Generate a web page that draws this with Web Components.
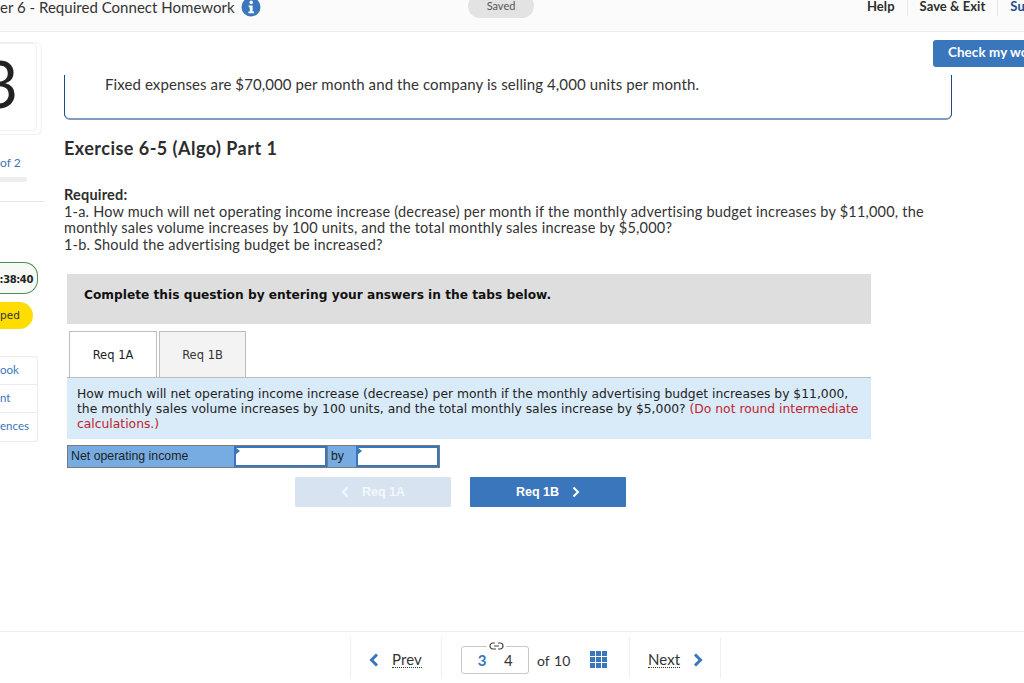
<!DOCTYPE html>
<html>
<head>
<meta charset="utf-8">
<title>Exercise 6-5</title>
<style>
  html, body { margin: 0; padding: 0; background: #fff; }
  body { width: 1024px; height: 683px; overflow: hidden; display: flex; flex-direction: column; font-family: Lato, "Liberation Sans", sans-serif; color: #2d2d2d; }
  .main { flex: 1; display: flex; min-height: 0; }
</style>
</head>
<body>
<app-header></app-header>
<div class="main">
  <side-rail></side-rail>
  <question-body></question-body>
</div>
<nav-footer></nav-footer>

<script>
class AppHeader extends HTMLElement {
  constructor() {
    super();
    this.attachShadow({ mode: 'open' });
    this.shadowRoot.innerHTML = `
      <style>
        :host { display: flex; flex: none; height: 32px; box-sizing: border-box; background: #fbfbfb; border-bottom: 1px solid #ececec; overflow: hidden; align-items: flex-start; }
        .title { width: 468px; flex: none; display: flex; align-items: center; gap: 6px; height: 14px; font-size: 15px; letter-spacing: .02px; color: #333; white-space: nowrap; }
        .title svg { flex: none; margin-top: -1px; }
        .saved { width: 66px; flex: none; height: 24px; margin-top: -6px; padding-top: 6px; box-sizing: border-box; border-radius: 12px; background: #e3e3e3; color: #555; font-size: 11px; line-height: 12px; text-align: center; }
        .links { display: flex; margin-left: 321px; font-size: 13px; font-weight: 700; line-height: 13px; letter-spacing: .05px; white-space: nowrap; color: #2d2d2d; }
        .links span { height: 16px; padding: 0 12px; border-right: 1px solid #e6e6e6; }
        .links span:last-child { border: 0; color: #1f4e8c; padding-right: 0; }
      </style>
      <div class="title">
        <span>er 6 - Required Connect Homework</span>
        <svg width="20" height="20" viewBox="0 0 20 20"><circle cx="10" cy="10" r="9.5" fill="#3a76bc"/><circle cx="10.2" cy="5.4" r="1.8" fill="#fff"/><path d="M7.6 8.400h4v6h1.400v1.800H7.400v-1.800h1.400v-4.200H7.600z" fill="#fff"/></svg>
      </div>
      <div class="saved">Saved</div>
      <div class="links"><span>Help</span><span>Save &amp; Exit</span><span>Su</span></div>
    `;
  }
}

class SideRail extends HTMLElement {
  constructor() {
    super();
    this.attachShadow({ mode: 'open' });
    this.shadowRoot.innerHTML = `
      <style>
        :host { display: block; flex: none; width: 64px; overflow: hidden; padding-top: 10px; box-sizing: border-box; }
        .outer { width: 42px; height: 93px; box-sizing: border-box; border: 1px solid #f0f0f0; border-left: 0; border-radius: 0 6px 6px 0; }
        .inner { width: 37px; height: 88px; box-sizing: border-box; border: 1px solid #f0f0f0; border-left: 0; border-radius: 0 5px 5px 0; overflow: hidden; }
        .num { font-size: 66px; line-height: 78px; margin-left: -20px; color: #222; }
        .of { margin-top: 21px; font-size: 12px; line-height: 14px; color: #3a76bc; }
        .bar { width: 27px; height: 5px; margin-top: 7px; border-radius: 0 3px 3px 0; background: #eeeeee; }
        .rule { width: 45px; height: 1px; margin-top: 19px; background: #e8e8e8; }
        .timer { display: flex; justify-content: flex-end; width: 38px; height: 32px; margin-top: 60px; box-sizing: border-box; border: 1px solid #4f8f4f; border-left: 0; border-radius: 0 14px 14px 0; background: #f6f9f5; font: 700 10px/33px "DejaVu Sans", sans-serif; letter-spacing: -.4px; color: #222; padding-right: 4px; white-space: nowrap; overflow: hidden; }
        .timer span { flex: none; }
        .status { width: 33px; height: 27px; margin-top: 8px; box-sizing: border-box; border-radius: 0 14px 14px 0; background: #ffdd00; font: 10.5px/27px "DejaVu Sans", sans-serif; color: #333; text-align: right; padding-right: 14px; }
        .links { width: 38px; margin-top: 27px; box-sizing: border-box; border: 1px solid #ececec; border-left: 0; border-radius: 0 4px 4px 0; }
        .links div { height: 28px; box-sizing: border-box; font: 11.5px/25px Lato, sans-serif; color: #3a76bc; border-bottom: 1px solid #ececec; white-space: nowrap; }
        .links div:last-child { border-bottom: 0; }
      </style>
      <div class="outer"><div class="inner"><div class="num">3</div></div></div>
      <div class="of">of 2</div>
      <div class="bar"></div>
      <div class="rule"></div>
      <div class="timer"><span>2:38:40</span></div>
      <div class="status">ped</div>
      <div class="links"><div>ook</div><div>nt</div><div>ences</div></div>
    `;
  }
}

class QuestionBody extends HTMLElement {
  constructor() {
    super();
    this.attachShadow({ mode: 'open' });
    this.shadowRoot.innerHTML = `
      <style>
        :host { display: block; flex: 1; min-width: 0; overflow: hidden; padding-top: 8px; font-size: 15px; letter-spacing: .1px; color: #333; }
        .check { width: 91px; height: 27px; margin-left: 869px; padding-left: 15px; box-sizing: border-box; white-space: nowrap; overflow: hidden; border-radius: 3px 0 0 3px; background: #3a76bc; color: #fff; font-size: 13.4px; font-weight: 700; line-height: 24px; }
        .given { width: 888px; height: 45px; margin-top: 8px; box-sizing: border-box; padding: 0 0 0 40px; border-left: 1px solid #1f4a86; border-right: 1px solid #1f4a86; border-bottom: 2px solid #7f9bc0; border-radius: 0 0 6px 6px; line-height: 18px; }
        h2 { margin: 17px 0 0; font-size: 18px; line-height: 22px; letter-spacing: .47px; font-weight: 700; color: #2d2d2d; }
        .req { margin-top: 28px; font-size: 14.5px; letter-spacing: .2px; line-height: 16.5px; width: 880px; }
        .req b { color: #2d2d2d; }
        .verd { margin-left: 3px; width: 804px; font-family: "DejaVu Sans", sans-serif; letter-spacing: 0; }
        .complete { height: 50px; margin-top: 21px; box-sizing: border-box; padding-left: 17px; background: #dedede; color: #111; font-size: 12.2px; font-weight: 700; line-height: 43px; }
        .tabs { display: flex; gap: 2px; margin: 7px 0 0 2px; position: relative; z-index: 1; }
        .tab { width: 88px; height: 46px; box-sizing: border-box; border: 1px solid #bdbdbd; border-bottom: 0; font-size: 11.5px; line-height: 46px; text-align: center; color: #222; background: #fff; }
        .tab + .tab { width: 87px; background: #f3f3f3; color: #333; }
        .panel { height: 62px; box-sizing: border-box; padding: 9px 10px 0; background: #d9ebf9; border-top: 1px solid #bdbdbd; font-size: 12.33px; line-height: 15px; color: #222; }
        .panel em { font-style: normal; color: #c0222c; }
        .grid { display: flex; width: 373px; height: 23px; margin-top: 6px; box-sizing: border-box; border: 1px solid #7a7a7a; background: #77ace3; font: 12.35px/21px "Liberation Sans", sans-serif; letter-spacing: 0; color: #222; }
        .grid .lbl { width: 166px; padding-left: 3px; box-sizing: border-box; }
        .grid .by { width: 29px; padding-left: 3px; box-sizing: border-box; border-left: 1px solid #7a7a7a; }
        .grid .cell { width: 93px; position: relative; box-sizing: border-box; background: #fff; border: 2px solid #3a76bc; }
        .grid .cell + .by + .cell { width: 83px; }
        .grid .cell::before { content: ""; position: absolute; left: -1px; top: -1px; border-left: 5px solid #3a76bc; border-top: 4px solid transparent; border-bottom: 4px solid transparent; }
        .btns { display: flex; gap: 19px; margin: 9px 0 0 228px; }
        .btn { display: flex; align-items: center; justify-content: center; gap: 13px; width: 156px; height: 30px; border-radius: 1px; background: #3a76bc; color: #fff; font: 700 12.5px/30px "Liberation Sans", sans-serif; letter-spacing: 0; }
        .btn.off { background: #d7e3f1; color: #f4f7fb; }
      </style>
      <div class="check">Check my wo</div>
      <div class="given">Fixed expenses are $70,000 per month and the company is selling 4,000 units per month.</div>
      <h2>Exercise 6-5 (Algo) Part 1</h2>
      <div class="req"><b>Required:</b><br>1-a. How much will net operating income increase (decrease) per month if the monthly advertising budget increases by $11,000, the monthly sales volume increases by 100 units, and the total monthly sales increase by $5,000?<br>1-b. Should the advertising budget be increased?</div>
      <div class="verd">
        <div class="complete">Complete this question by entering your answers in the tabs below.</div>
        <div class="tabs"><div class="tab">Req 1A</div><div class="tab">Req 1B</div></div>
        <div class="panel">How much will net operating income increase (decrease) per month if the monthly advertising budget increases by $11,000, the monthly sales volume increases by 100 units, and the total monthly sales increase by $5,000? <em>(Do not round intermediate calculations.)</em></div>
        <div class="grid"><div class="lbl">Net operating income</div><div class="cell"></div><div class="by">by</div><div class="cell"></div></div>
        <div class="btns">
          <div class="btn off"><svg width="8" height="12" viewBox="0 0 8 12"><path d="M6.500 1.500 2 6l4.500 4.500" fill="none" stroke="#f4f7fb" stroke-width="2"/></svg><span>Req 1A</span></div>
          <div class="btn"><span>Req 1B</span><svg width="8" height="12" viewBox="0 0 8 12"><path d="M1.500 1.500 6 6l-4.500 4.500" fill="none" stroke="#fff" stroke-width="2"/></svg></div>
        </div>
      </div>
    `;
  }
}

class NavFooter extends HTMLElement {
  constructor() {
    super();
    this.attachShadow({ mode: 'open' });
    let cells = '';
    for (let i = 0; i < 9; i++) cells += '<i></i>';
    this.shadowRoot.innerHTML = `
      <style>
        :host { display: flex; flex: none; height: 52px; box-sizing: border-box; border-top: 1px solid #efefef; padding: 5px 0 0 350px; font-size: 15px; color: #333; }
        .seg { height: 41px; box-sizing: border-box; display: flex; align-items: center; border-left: 1px solid #efefef; }
        .seg.prev { width: 91px; padding: 4px 0 0 18px; gap: 13px; }
        .seg.mid { width: 188px; padding: 6px 0 0 19px; }
        .seg.next { width: 92px; padding: 4px 0 0 18px; gap: 13px; border-right: 1px solid #efefef; }
        .dot { border-bottom: 1px dotted #333; line-height: 15px; letter-spacing: .1px; }
        .pages { position: relative; display: flex; width: 68px; height: 28px; box-sizing: border-box; border: 1px solid #c8c8c8; border-radius: 3px; line-height: 26px; font-size: 15px; margin-top: -1px; }
        .pages b { width: 40px; text-align: center; color: #3a76bc; }
        .pages span { color: #333; margin-left: 2px; }
        .pages svg { position: absolute; left: 25px; top: -5px; background: #fff; padding: 0 2px; }
        .of { margin-left: 8px; font-size: 14px; }
        .of span { margin-left: 1px; }
        .dots { display: grid; grid-template-columns: repeat(3, 5px); grid-auto-rows: 5px; gap: 1px; margin: -2px 0 0 20px; }
        .dots i { background: #3a76bc; }
      </style>
      <div class="seg prev">
        <svg width="10" height="14" viewBox="0 0 10 14"><path d="M8 1.500 2.500 7 8 12.500" fill="none" stroke="#3a76bc" stroke-width="3"/></svg>
        <span class="dot">Prev</span>
      </div>
      <div class="seg mid">
        <div class="pages">
          <b>3</b><span>4</span>
          <svg width="15" height="8" viewBox="0 0 15 8"><path d="M6 1H4a3 3 0 0 0 0 6h3M9 1h2a3 3 0 0 1 0 6H9M5 4h5" fill="none" stroke="#444" stroke-width="1.200"/></svg>
        </div>
        <div class="of">of <span>10</span></div>
        <div class="dots">${cells}</div>
      </div>
      <div class="seg next">
        <span class="dot">Next</span>
        <svg width="10" height="14" viewBox="0 0 10 14"><path d="M2 1.500 7.500 7 2 12.500" fill="none" stroke="#3a76bc" stroke-width="3"/></svg>
      </div>
    `;
  }
}

customElements.define('app-header', AppHeader);
customElements.define('side-rail', SideRail);
customElements.define('question-body', QuestionBody);
customElements.define('nav-footer', NavFooter);
</script>
</body>
</html>
